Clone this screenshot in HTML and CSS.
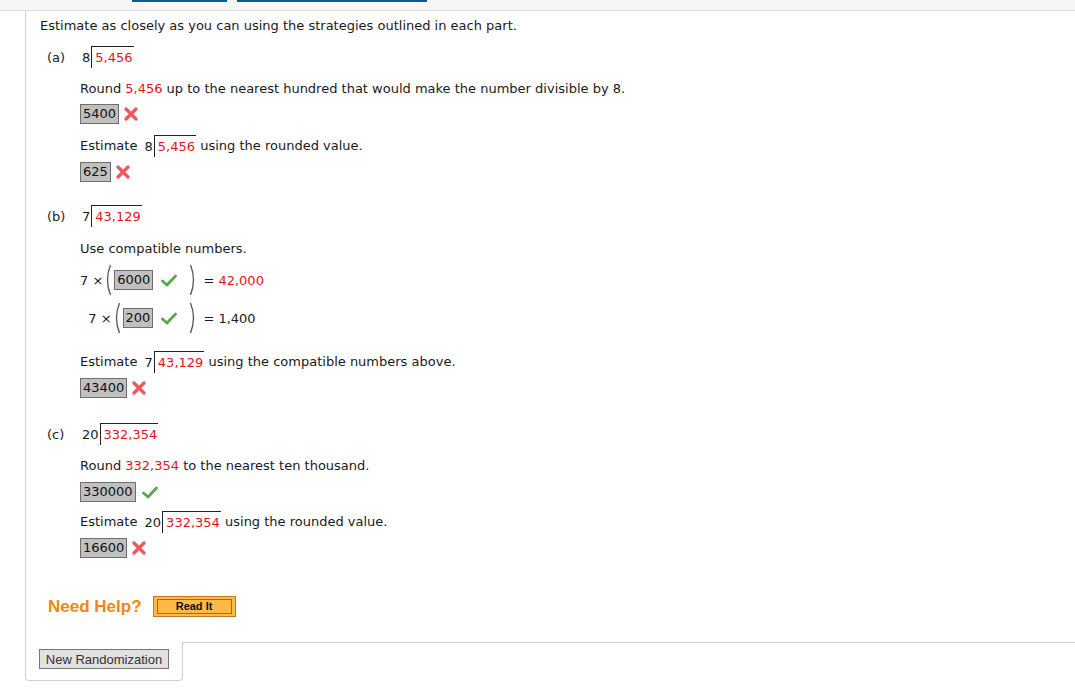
FILE: index.html
```html
<!DOCTYPE html>
<html>
<head>
<meta charset="utf-8">
<link rel="stylesheet" href="styles.css">
</head>
<body>
<div class="topbar">
  <span class="toptab t1"></span>
  <span class="toptab t2"></span>
</div>
<div class="panel">
  <div class="content">
    <div class="intro">Estimate as closely as you can using the strategies outlined in each part.</div>

    <div class="part pa">
      <div class="part-head"><span class="label">(a)</span><span class="div"><span class="dvr">8</span><span class="dvd red">5,456</span></span></div>
      <div class="sub">
        <div class="prompt">Round <span class="red">5,456</span> up to the nearest hundred that would make the number divisible by 8.</div>
        <div class="ans"><span class="box">5400</span><svg class="icon-x" viewBox="0 0 14 14"><path d="M2 2 L12 12 M12 2 L2 12"/></svg></div>
        <div class="prompt pdiv">Estimate <span class="div"><span class="dvr">8</span><span class="dvd red">5,456</span></span> using the rounded value.</div>
        <div class="ans a2"><span class="box">625</span><svg class="icon-x" viewBox="0 0 14 14"><path d="M2 2 L12 12 M12 2 L2 12"/></svg></div>
      </div>
    </div>

    <div class="part">
      <div class="part-head"><span class="label">(b)</span><span class="div"><span class="dvr">7</span><span class="dvd red">43,129</span></span></div>
      <div class="sub">
        <div class="prompt p15">Use compatible numbers.</div>
        <div class="eqs">
          <div class="eq">
            <div class="lhs">7 ×<svg class="paren" viewBox="0 0 8 32"><path d="M6.5 1 Q0.5 16 6.5 31"/></svg><span class="box">6000</span></div>
            <div class="chk"><svg class="icon-v" viewBox="0 0 16 13"><path d="M1.5 7 L6 11 L14.5 2"/></svg></div>
            <svg class="paren" viewBox="0 0 8 32"><path d="M1.5 1 Q7.5 16 1.5 31"/></svg>
            <div class="rhs">= <span class="red">42,000</span></div>
          </div>
          <div class="eq">
            <div class="lhs">7 ×<svg class="paren" viewBox="0 0 8 32"><path d="M6.5 1 Q0.5 16 6.5 31"/></svg><span class="box">200</span></div>
            <div class="chk"><svg class="icon-v" viewBox="0 0 16 13"><path d="M1.5 7 L6 11 L14.5 2"/></svg></div>
            <svg class="paren" viewBox="0 0 8 32"><path d="M1.5 1 Q7.5 16 1.5 31"/></svg>
            <div class="rhs">= 1,400</div>
          </div>
        </div>
        <div class="prompt pdiv p18">Estimate <span class="div"><span class="dvr">7</span><span class="dvd red">43,129</span></span> using the compatible numbers above.</div>
        <div class="ans a2"><span class="box">43400</span><svg class="icon-x" viewBox="0 0 14 14"><path d="M2 2 L12 12 M12 2 L2 12"/></svg></div>
      </div>
    </div>

    <div class="part pc">
      <div class="part-head"><span class="label">(c)</span><span class="div"><span class="dvr">20</span><span class="dvd red">332,354</span></span></div>
      <div class="sub">
        <div class="prompt">Round <span class="red">332,354</span> to the nearest ten thousand.</div>
        <div class="ans a8"><span class="box">330000</span><svg class="icon-v" viewBox="0 0 16 13"><path d="M1.5 7 L6 11 L14.5 2"/></svg></div>
        <div class="prompt pdiv p10">Estimate <span class="div"><span class="dvr">20</span><span class="dvd red">332,354</span></span> using the rounded value.</div>
        <div class="ans a2"><span class="box">16600</span><svg class="icon-x" viewBox="0 0 14 14"><path d="M2 2 L12 12 M12 2 L2 12"/></svg></div>
      </div>
    </div>

    <div class="help">
      <span class="help-text">Need Help?</span>
      <button class="read"><span>Read It</span></button>
    </div>
  </div>
  <div class="footer">
    <div class="tab"><button class="newrand">New Randomization</button></div>
    <div class="tab-rest"></div>
  </div>
</div>
</body>
</html>
```

FILE: styles.css
```css
html, body {
  margin: 0;
  padding: 0;
  background: #fff;
}
body {
  font-family: "DejaVu Sans", Verdana, sans-serif;
  font-size: 13px;
  color: #1a1a1a;
}
.topbar {
  height: 10px;
  background: #f6f6f6;
  border-bottom: 1px solid #dcdcdc;
  display: flex;
  align-items: flex-start;
  gap: 10px;
  padding-left: 132px;
}
.toptab {
  height: 2px;
  background: #0a5e98;
}
.t1 { width: 95px; }
.t2 { width: 190px; }

.panel {
  margin-left: 25px;
}
.content {
  border-left: 1px solid #cfcfcf;
  padding: 7px 0 25px 14px;
}
.intro {
  line-height: 16px;
}
.red { color: #e3141c; }

.part { margin-top: 24px; }
.part.pa { margin-top: 13px; }
.part.pc { margin-top: 26px; }
.part-head {
  height: 20px;
  display: flex;
  align-items: center;
  padding-left: 7px;
}
.label {
  width: 35px;
  color: #222;
}
.div {
  display: inline-flex;
  align-items: baseline;
  line-height: 18px;
}
.dvr {
  padding-right: 1px;
}
.dvd {
  border-left: 1px solid #222;
  border-top: 1px solid #222;
  padding: 2px 1px 1px 3px;
  line-height: 18px;
}
.sub {
  padding-left: 40px;
}
.prompt {
  margin-top: 14px;
  line-height: 16px;
}
.prompt.p15 { margin-top: 15px; }
.prompt.pdiv {
  margin-top: 12px;
  height: 20px;
  display: flex;
  align-items: center;
  white-space: pre;
}
.prompt.pdiv .div { margin-left: 3px; }
.prompt.p18 { margin-top: 18px; }
.prompt.p10 { margin-top: 10px; }

.ans {
  margin-top: 7px;
  display: flex;
  align-items: center;
  gap: 4px;
  height: 20px;
}
.ans.a2 { margin-top: 6px; }
.ans.a8 { margin-top: 8px; }
.box {
  display: inline-block;
  background: #c0c0c0;
  border: 1px solid #6e6e6e;
  padding: 0 2px;
  height: 18px;
  line-height: 18px;
  color: #111;
}
.icon-x {
  width: 14px;
  height: 14px;
  margin-left: 1px;
}
.icon-x path {
  stroke: #f0555a;
  stroke-width: 3.2;
  stroke-linecap: round;
  fill: none;
}
.icon-v {
  width: 16px;
  height: 13px;
  margin-left: 2px;
}
.icon-v path {
  stroke: #5aa84a;
  stroke-width: 2.8;
  stroke-linecap: round;
  stroke-linejoin: round;
  fill: none;
}

.eqs {
  margin-top: 7px;
  display: grid;
  grid-template-columns: auto 36px 8px auto;
  justify-content: start;
  row-gap: 6px;
  align-items: center;
}
.eq {
  display: contents;
}
.lhs {
  display: flex;
  align-items: center;
  justify-content: flex-end;
  height: 32px;
  white-space: nowrap;
}
.lhs .paren { margin-left: 1px; margin-right: 2px; }
.chk {
  display: flex;
  align-items: center;
  padding-left: 6px;
}
.paren {
  width: 8px;
  height: 32px;
  flex-shrink: 0;
}
.paren path {
  stroke: #555;
  stroke-width: 1.3;
  fill: none;
}
.rhs {
  padding-left: 6px;
  white-space: pre;
}

.help {
  margin-top: 38px;
  padding-left: 8px;
  display: flex;
  align-items: center;
  gap: 11px;
  height: 21px;
}
.help-text {
  font-family: "Liberation Sans", Arial, sans-serif;
  font-weight: bold;
  font-size: 17px;
  color: #f0880f;
}
.read {
  width: 83px;
  height: 21px;
  padding: 2px 3px;
  margin: 0;
  border: 1px solid #c4792a;
  background: #ffb947;
  display: flex;
  cursor: pointer;
}
.read span {
  flex: 1;
  border: 1px solid #a8682a;
  font-family: "Liberation Sans", Arial, sans-serif;
  font-weight: bold;
  font-size: 11px;
  color: #111;
  line-height: 13px;
  text-align: center;
}

.footer {
  display: flex;
  align-items: flex-start;
}
.tab {
  width: 158px;
  height: 39px;
  border: 1px solid #cfcfcf;
  border-top: none;
  border-radius: 0 0 4px 4px;
  padding-left: 13px;
  padding-top: 7px;
  box-sizing: border-box;
}
.tab-rest {
  flex: 1;
  border-top: 1px solid #cfcfcf;
}
.newrand {
  margin: 0;
  padding: 0 5px;
  height: 20px;
  width: 130px;
  white-space: nowrap;
  background: #e1e1e1;
  border: 1px solid #767676;
  font-family: "Liberation Sans", Arial, sans-serif;
  font-size: 13px;
  color: #333;
}
```
